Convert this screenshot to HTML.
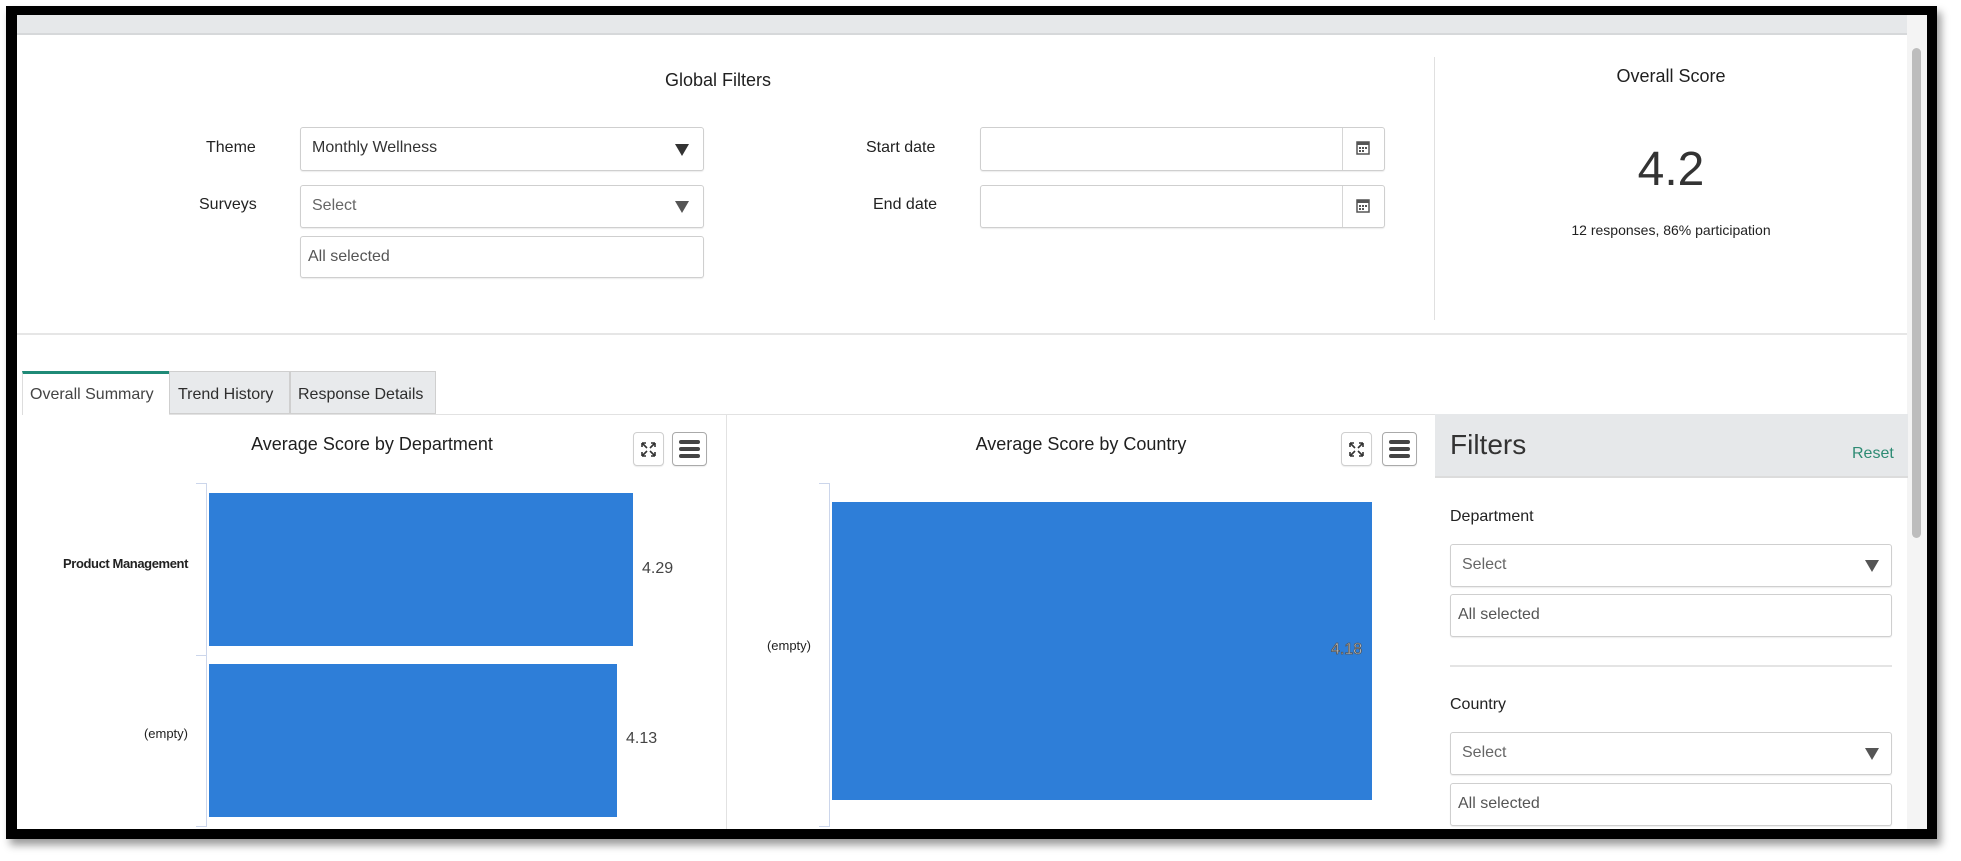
<!DOCTYPE html>
<html><head><meta charset="utf-8"><style>
*{margin:0;padding:0;box-sizing:border-box}
body{width:1961px;height:861px;background:#fff;position:relative;overflow:hidden;font-family:"Liberation Sans",sans-serif;color:#2e2e2e}
.a{position:absolute}
.t{position:absolute;white-space:nowrap}
.box{position:absolute;border:1px solid #cfcfcf;border-radius:3px;background:#fff;box-shadow:0 1px 1px rgba(0,0,0,.08)}
.arrow{position:absolute;width:0;height:0;border-left:7px solid transparent;border-right:7px solid transparent;border-top:12px solid #333}
.bar{position:absolute;background:#2e7ed8}
.ttl{color:#1f1f1f}
.lbl{color:#222}
</style></head><body>
<div class="a" style="left:6px;top:6px;width:1931px;height:833px;background:#000;box-shadow:4px 6px 8px rgba(0,0,0,.4)"></div>
<div class="a" style="left:17px;top:15px;width:1910px;height:814px;background:#fff"></div>
<div class="a" style="left:17px;top:15px;width:1890px;height:20px;background:#e6e8ea;border-bottom:2px solid #d6d8da"></div>
<div class="a" style="left:1907px;top:15px;width:20px;height:814px;background:#f4f4f4"></div>
<div class="a" style="left:1912px;top:48px;width:9px;height:490px;background:#bdbdbd;border-radius:5px"></div>

<div class="t ttl" style="left:665px;top:70px;font-size:18px">Global Filters</div>
<div class="t lbl" style="left:206px;top:139px;font-size:16px">Theme</div>
<div class="box" style="left:300px;top:127px;width:404px;height:44px"></div>
<div class="t" style="left:312px;top:139px;font-size:16px;color:#333">Monthly Wellness</div>
<div class="arrow" style="left:675px;top:144px"></div>
<div class="t lbl" style="left:199px;top:196px;font-size:16px">Surveys</div>
<div class="box" style="left:300px;top:185px;width:404px;height:43px"></div>
<div class="t" style="left:312px;top:197px;font-size:16px;color:#666">Select</div>
<div class="arrow" style="left:675px;top:201px;border-top-color:#555"></div>
<div class="box" style="left:300px;top:236px;width:404px;height:42px"></div>
<div class="t" style="left:308px;top:248px;font-size:16px;color:#555">All selected</div>

<div class="t lbl" style="left:866px;top:139px;font-size:16px">Start date</div>
<div class="box" style="left:980px;top:127px;width:405px;height:44px"></div>
<div class="a" style="left:1342px;top:128px;width:1px;height:42px;background:#d6d6d6"></div>
<div class="t lbl" style="left:873px;top:196px;font-size:16px">End date</div>
<div class="box" style="left:980px;top:185px;width:405px;height:43px"></div>
<div class="a" style="left:1342px;top:186px;width:1px;height:41px;background:#d6d6d6"></div>
<svg class="a" style="left:1356px;top:140px" width="14" height="15" viewBox="0 0 14 15"><rect x="1" y="2" width="12" height="12" fill="none" stroke="#555" stroke-width="1.5"/><rect x="1" y="2" width="12" height="3" fill="#555"/><rect x="3" y="7" width="2" height="2" fill="#555"/><rect x="6" y="7" width="2" height="2" fill="#555"/><rect x="9" y="7" width="2" height="2" fill="#555"/><rect x="3" y="10" width="2" height="2" fill="#555"/><rect x="6" y="10" width="2" height="2" fill="#555"/></svg>
<svg class="a" style="left:1356px;top:198px" width="14" height="15" viewBox="0 0 14 15"><rect x="1" y="2" width="12" height="12" fill="none" stroke="#555" stroke-width="1.5"/><rect x="1" y="2" width="12" height="3" fill="#555"/><rect x="3" y="7" width="2" height="2" fill="#555"/><rect x="6" y="7" width="2" height="2" fill="#555"/><rect x="9" y="7" width="2" height="2" fill="#555"/><rect x="3" y="10" width="2" height="2" fill="#555"/><rect x="6" y="10" width="2" height="2" fill="#555"/></svg>

<div class="a" style="left:1434px;top:57px;width:1px;height:263px;background:#e0e0e0"></div>
<div class="t ttl" style="left:1671px;top:66px;font-size:18px;transform:translateX(-50%)">Overall Score</div>
<div class="t" style="left:1671px;top:142px;font-size:48px;transform:translateX(-50%);color:#333">4.2</div>
<div class="t" style="left:1671px;top:222px;font-size:14px;transform:translateX(-50%);color:#222">12 responses, 86% participation</div>

<div class="a" style="left:17px;top:333px;width:1890px;height:2px;background:#e6e6e6"></div>

<div class="a" style="left:22px;top:371px;width:147px;height:44px;border-top:3px solid #1f8a77;border-left:1px solid #ddd;background:#fff"></div>
<div class="t" style="left:30px;top:386px;font-size:16px;color:#444">Overall Summary</div>
<div class="a" style="left:169px;top:371px;width:121px;height:43px;background:#e8eaec;border:1px solid #cfcfcf"></div>
<div class="t" style="left:178px;top:386px;font-size:16px">Trend History</div>
<div class="a" style="left:290px;top:371px;width:146px;height:43px;background:#e8eaec;border:1px solid #cfcfcf"></div>
<div class="t" style="left:298px;top:386px;font-size:16px">Response Details</div>
<div class="a" style="left:169px;top:414px;width:1738px;height:1px;background:#e2e2e2"></div>

<div class="t ttl" style="left:372px;top:434px;font-size:18px;transform:translateX(-50%)">Average Score by Department</div>
<div class="box" style="left:633px;top:432px;width:31px;height:34px;border-radius:4px"></div>
<svg class="a" style="left:640px;top:441px" width="17" height="17" viewBox="0 0 17 17" fill="none" stroke="#333" stroke-width="1.6"><path d="M2 2L7 7M2 2h4M2 2v4M15 2L10 7M15 2h-4M15 2v4M2 15L7 10M2 15h4M2 15v-4M15 15L10 10M15 15h-4M15 15v-4"/></svg>
<div class="box" style="left:672px;top:432px;width:35px;height:34px;border-radius:4px;border-color:#aaa"></div>
<div class="a" style="left:679px;top:440px;width:21px;height:4px;background:#444;border-radius:2px"></div>
<div class="a" style="left:679px;top:447px;width:21px;height:4px;background:#444;border-radius:2px"></div>
<div class="a" style="left:679px;top:454px;width:21px;height:4px;background:#444;border-radius:2px"></div>

<div class="a" style="left:206px;top:483px;width:1px;height:344px;background:#ccd6eb"></div>
<div class="a" style="left:196px;top:483px;width:10px;height:1px;background:#ccd6eb"></div>
<div class="a" style="left:196px;top:655px;width:10px;height:1px;background:#ccd6eb"></div>
<div class="a" style="left:196px;top:826px;width:10px;height:1px;background:#ccd6eb"></div>
<div class="bar" style="left:209px;top:493px;width:424px;height:153px"></div>
<div class="bar" style="left:209px;top:664px;width:408px;height:153px"></div>
<div class="t" style="left:188px;top:556px;font-size:13px;font-weight:bold;letter-spacing:-0.4px;transform:translateX(-100%);color:#222">Product Management</div>
<div class="t" style="left:188px;top:726px;font-size:13px;transform:translateX(-100%);color:#222">(empty)</div>
<div class="t" style="left:642px;top:560px;font-size:16px;color:#444">4.29</div>
<div class="t" style="left:626px;top:730px;font-size:16px;color:#444">4.13</div>

<div class="a" style="left:726px;top:415px;width:1px;height:414px;background:#e2e2e2"></div>

<div class="t ttl" style="left:1081px;top:434px;font-size:18px;transform:translateX(-50%)">Average Score by Country</div>
<div class="box" style="left:1341px;top:432px;width:31px;height:34px;border-radius:4px"></div>
<svg class="a" style="left:1348px;top:441px" width="17" height="17" viewBox="0 0 17 17" fill="none" stroke="#333" stroke-width="1.6"><path d="M2 2L7 7M2 2h4M2 2v4M15 2L10 7M15 2h-4M15 2v4M2 15L7 10M2 15h4M2 15v-4M15 15L10 10M15 15h-4M15 15v-4"/></svg>
<div class="box" style="left:1382px;top:432px;width:35px;height:34px;border-radius:4px;border-color:#aaa"></div>
<div class="a" style="left:1389px;top:440px;width:21px;height:4px;background:#444;border-radius:2px"></div>
<div class="a" style="left:1389px;top:447px;width:21px;height:4px;background:#444;border-radius:2px"></div>
<div class="a" style="left:1389px;top:454px;width:21px;height:4px;background:#444;border-radius:2px"></div>
<div class="a" style="left:829px;top:483px;width:1px;height:344px;background:#ccd6eb"></div>
<div class="a" style="left:819px;top:483px;width:10px;height:1px;background:#ccd6eb"></div>
<div class="a" style="left:819px;top:826px;width:10px;height:1px;background:#ccd6eb"></div>
<div class="bar" style="left:832px;top:502px;width:540px;height:298px"></div>
<div class="t" style="left:811px;top:638px;font-size:13px;transform:translateX(-100%);color:#222">(empty)</div>
<div class="t" style="left:1331px;top:641px;font-size:16px;color:#e8e8e8;-webkit-text-stroke:0.8px #555">4.18</div>

<div class="a" style="left:1435px;top:414px;width:473px;height:64px;background:#e6e8ea;border-bottom:2px solid #dcdcdc"></div>
<div class="t" style="left:1450px;top:429px;font-size:28px;color:#333">Filters</div>
<div class="t" style="left:1852px;top:445px;font-size:16px;color:#2e8b74">Reset</div>
<div class="t lbl" style="left:1450px;top:508px;font-size:16px">Department</div>
<div class="box" style="left:1450px;top:544px;width:442px;height:43px"></div>
<div class="t" style="left:1462px;top:556px;font-size:16px;color:#666">Select</div>
<div class="arrow" style="left:1865px;top:560px;border-top-color:#555"></div>
<div class="box" style="left:1450px;top:594px;width:442px;height:43px"></div>
<div class="t" style="left:1458px;top:606px;font-size:16px;color:#555">All selected</div>
<div class="a" style="left:1450px;top:665px;width:442px;height:2px;background:#e4e4e4"></div>
<div class="t lbl" style="left:1450px;top:696px;font-size:16px">Country</div>
<div class="box" style="left:1450px;top:732px;width:442px;height:43px"></div>
<div class="t" style="left:1462px;top:744px;font-size:16px;color:#666">Select</div>
<div class="arrow" style="left:1865px;top:748px;border-top-color:#555"></div>
<div class="box" style="left:1450px;top:783px;width:442px;height:43px"></div>
<div class="t" style="left:1458px;top:795px;font-size:16px;color:#555">All selected</div>
</body></html>
